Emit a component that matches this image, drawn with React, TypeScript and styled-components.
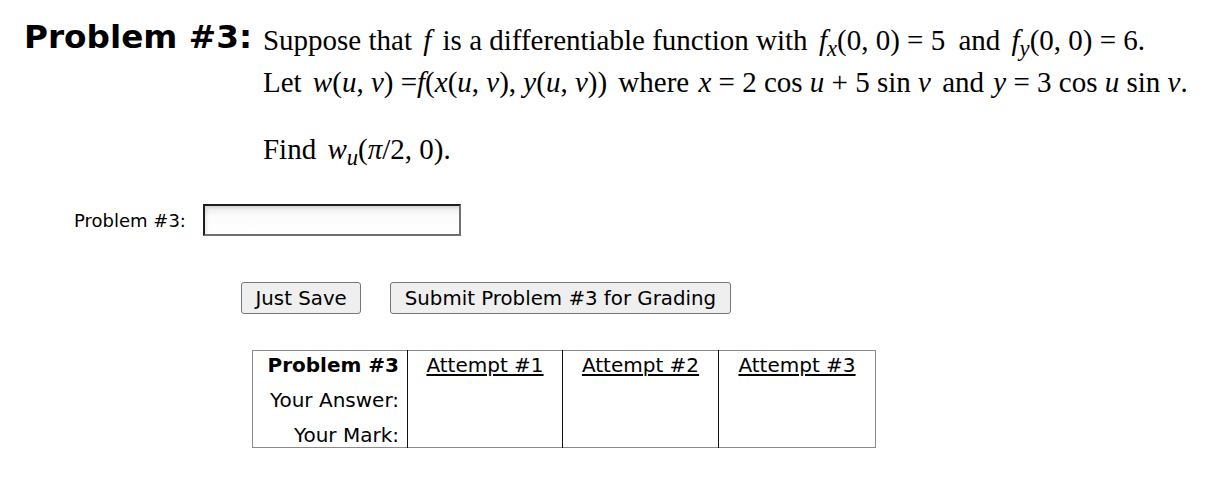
import React from "react";
import styled, { createGlobalStyle } from "styled-components";

const Global = createGlobalStyle`
  html, body { margin: 0; padding: 0; background: #fff; }
  body { font-family: "DejaVu Sans", Verdana, sans-serif; color: #000; }
`;

const Page = styled.div`
  padding: 19px 0 0 24px;
  width: 1212px;
  height: 490px;
  box-sizing: border-box;
  display: flex;
  flex-direction: column;
  align-items: flex-start;
`;

const Header = styled.div`
  display: flex;
  align-items: flex-start;
  gap: 11px;
`;

const Title = styled.h2`
  margin: 2px 0 0;
  font-family: "DejaVu Sans", Verdana, sans-serif;
  font-weight: bold;
  font-size: 32.7px;
  line-height: 32px;
  white-space: nowrap;
`;

const Statement = styled.div`
  font-family: "Liberation Serif", "Times New Roman", serif;
  font-size: 29px;
  white-space: nowrap;
`;

const Line = styled.div<{ $gap?: number }>`
  line-height: 42px;
  margin-top: ${(p) => p.$gap ?? 0}px;
`;

const I = styled.i`
  font-style: italic;
`;

const Sub = styled.sub`
  font-size: 0.78em;
  font-style: italic;
  vertical-align: -0.28em;
  line-height: 0;
`;

const Sp = styled.span<{ $w: number }>`
  display: inline-block;
  width: ${(p) => p.$w}px;
`;

const AnswerRow = styled.div`
  display: flex;
  align-items: center;
  gap: 17px;
  margin: 34px 0 0 50px;
`;

const Label = styled.label`
  font-size: 18px;
  font-family: "DejaVu Sans", Verdana, sans-serif;
`;

const AnswerInput = styled.input`
  box-sizing: border-box;
  width: 258px;
  height: 32px;
  border-style: solid;
  border-width: 2px;
  border-color: #1e1e1e #707070 #707070 #1e1e1e;
  background: linear-gradient(#e8e8e8, #fcfcfc 35%, #fff);
  box-shadow: inset 2px 2px 3px rgba(0, 0, 0, 0.08);
  padding: 2px 4px;
  font-size: 18px;
  outline: none;
`;

const ButtonRow = styled.div`
  display: flex;
  gap: 29px;
  margin: 46px 0 0 217px;
`;

const Button = styled.button`
  box-sizing: border-box;
  height: 32px;
  padding: 0 13.5px;
  font-family: "DejaVu Sans", Verdana, sans-serif;
  font-size: 19.8px;
  color: #000;
  background: #efefef;
  border: 1px solid #767676;
  border-radius: 3px;
`;

const Table = styled.table`
  margin: 36px 0 0 228px;
  border-collapse: collapse;
  border: 1px solid #8a8a8a;
  width: 623px;
  table-layout: fixed;
  font-family: "DejaVu Sans", Verdana, sans-serif;
  font-size: 20px;
  line-height: 23px;
`;

const Row = styled.tr<{ $h: number; $pb: number }>`
  height: ${(p) => p.$h}px;
  & > td {
    padding-bottom: ${(p) => p.$pb}px;
  }
`;

const Cell = styled.td<{ $head?: boolean; $first?: boolean }>`
  padding: 0 8px;
  text-align: ${(p) => (p.$first ? "right" : "center")};
  font-weight: ${(p) => (p.$head && p.$first ? "bold" : "normal")};
  border-left: ${(p) => (p.$first ? "none" : "1px solid #111")};
  vertical-align: bottom;
  white-space: nowrap;
`;

const Link = styled.a`
  color: #000;
  text-decoration: underline;
  text-underline-offset: 2px;
`;

export default function App() {
  return (
    <>
      <Global />
      <Page>
        <Header>
          <Title>Problem #3:</Title>
          <Statement>
            <Line>
              Suppose that <Sp $w={4} />
              <I>f</I> <Sp $w={4} />is a differentiable function with <Sp $w={4} />
              <I>f</I>
              <Sub>x</Sub>(0, 0) = 5 <Sp $w={6} />and <Sp $w={4} />
              <I>f</I>
              <Sub>y</Sub>(0, 0) = 6.
            </Line>
            <Line>
              Let <Sp $w={4} />
              <I>w</I>(<I>u</I>, <I>v</I>) =<I>f</I>(<I>x</I>(<I>u</I>, <I>v</I>), <I>y</I>(<I>u</I>,{" "}
              <I>v</I>)) <Sp $w={4} />where <Sp $w={2} />
              <I>x</I> = 2 cos <I>u</I> + 5 sin <I>v</I> <Sp $w={4} />and <Sp $w={2} />
              <I>y</I> = 3 cos <I>u</I> sin <I>v</I>.
            </Line>
            <Line $gap={25}>
              Find <Sp $w={4} />
              <I>w</I>
              <Sub>u</Sub>(<I>π</I>/2, 0).
            </Line>
          </Statement>
        </Header>

        <AnswerRow>
          <Label htmlFor="ans">Problem #3:</Label>
          <AnswerInput id="ans" type="text" />
        </AnswerRow>

        <ButtonRow>
          <Button type="button">Just Save</Button>
          <Button type="button">Submit Problem #3 for Grading</Button>
        </ButtonRow>

        <Table>
          <colgroup>
            <col style={{ width: 155 }} />
            <col style={{ width: 155 }} />
            <col style={{ width: 156 }} />
            <col style={{ width: 157 }} />
          </colgroup>
          <tbody>
            <Row $h={29} $pb={3}>
              <Cell $first $head>
                Problem #3
              </Cell>
              <Cell>
                <Link href="#a1">Attempt #1</Link>
              </Cell>
              <Cell>
                <Link href="#a2">Attempt #2</Link>
              </Cell>
              <Cell>
                <Link href="#a3">Attempt #3</Link>
              </Cell>
            </Row>
            <Row $h={35} $pb={3}>
              <Cell $first>Your Answer:</Cell>
              <Cell />
              <Cell />
              <Cell />
            </Row>
            <Row $h={33} $pb={0}>
              <Cell $first>Your Mark:</Cell>
              <Cell />
              <Cell />
              <Cell />
            </Row>
          </tbody>
        </Table>
      </Page>
    </>
  );
}
